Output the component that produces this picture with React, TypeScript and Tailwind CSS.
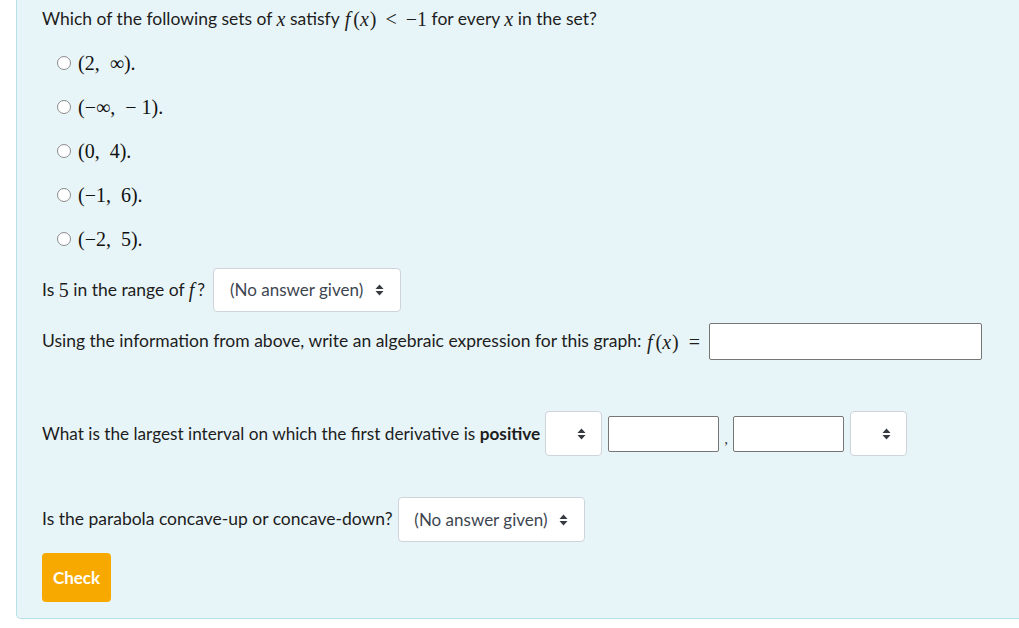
import React from 'react'

const sans = { fontFamily: 'Lato, "Open Sans", sans-serif' }
const serif = 'font-["Liberation_Serif",serif]'

function Arrows() {
  return (
    <svg width="9" height="12" viewBox="0 0 9 12" className="shrink-0">
      <path d="M4.5 0.5 L8.5 5 L0.5 5 Z" fill="#343a40" />
      <path d="M4.5 11.5 L8.5 7 L0.5 7 Z" fill="#343a40" />
    </svg>
  )
}

function Select({ label, className }: { label?: string; className: string }) {
  return (
    <div
      className={`flex items-center justify-end gap-3 bg-white border border-[#ced4da] rounded-[4px] ${className}`}
    >
      {label && <span className="text-[#3d4650] text-[17px]">{label}</span>}
      <Arrows />
    </div>
  )
}

function Option({ children }: { children: React.ReactNode }) {
  return (
    <div className="h-[44px] flex items-center">
      <span className="ml-[15px] w-[14px] h-[14px] rounded-full border border-[#8a8a8a] bg-white" />
      <span className={`ml-[7px] text-[20px] text-[#111] ${serif}`}>{children}</span>
    </div>
  )
}

// f(x) typeset roughly like MathJax
function Fx() {
  return (
    <>
      <i className="pl-[1px] pr-[3px]">f</i>(<i className="pr-[1px]">x</i>)
    </>
  )
}

export default function App() {
  return (
    <div className="w-full overflow-hidden bg-white text-[#1d1d1d]" style={sans}>
      <div className="ml-[16px] -mr-[20px] bg-[#e8f5f8] border-l border-b border-[#b7e0e8] rounded-bl-[5px] pl-[25px] pt-[7px] pb-[16px] text-[17.5px]">
        <div className="h-[24px] flex items-center">
          <span>Which of the following sets of&nbsp;</span>
          <i className={`${serif} text-[20px]`}>x</i>
          <span>&nbsp;satisfy&nbsp;</span>
          <span className={`${serif} text-[20px]`}>
            <Fx />
            <span className="mx-[9px]">&lt;</span>−1
          </span>
          <span>&nbsp;for every&nbsp;</span>
          <i className={`${serif} text-[20px]`}>x</i>
          <span>&nbsp;in the set?</span>
        </div>

        <div className="mt-[10px]">
          <Option>(2, &nbsp;∞).</Option>
          <Option>(−∞, &nbsp;− 1).</Option>
          <Option>(0, &nbsp;4).</Option>
          <Option>(−1, &nbsp;6).</Option>
          <Option>(−2, &nbsp;5).</Option>
        </div>

        <div className="mt-[7px] flex items-center">
          <span>Is&nbsp;</span>
          <span className={`${serif} text-[20px]`}>5</span>
          <span>&nbsp;in the range of&nbsp;</span>
          <i className={`${serif} text-[20px] pr-[3px]`}>f</i>
          <span>?</span>
          <Select label="(No answer given)" className="ml-[8px] w-[188px] h-[44px] pr-[16px]" />
        </div>

        <div className="mt-[11px] flex items-center">
          <span>Using the information from above, write an algebraic expression for this graph:&nbsp;</span>
          <span className={`${serif} text-[20px]`}>
            <Fx />
            <span className="ml-[10px]">=</span>
          </span>
          <div className="ml-[9px] w-[273px] h-[37px] bg-white border border-[#767676] rounded-[2px]" />
        </div>

        <div className="mt-[51px] flex items-center text-[17.2px]">
          <span>What is the largest interval on which the first derivative is&nbsp;</span>
          <span className="font-bold">positive</span>
          <Select className="ml-[5px] w-[57px] h-[45px] pr-[15px]" />
          <div className="ml-[6px] w-[111px] h-[36px] bg-white border border-[#767676] rounded-[2px]" />
          <span className={`ml-[5px] mt-[12px] text-[#333] text-[15px] italic ${serif}`}>,</span>
          <div className="ml-[5px] w-[111px] h-[36px] bg-white border border-[#767676] rounded-[2px]" />
          <Select className="ml-[6px] w-[57px] h-[45px] pr-[15px]" />
        </div>

        <div className="mt-[41px] flex items-center">
          <span>Is the parabola concave-up or concave-down?</span>
          <Select label="(No answer given)" className="ml-[6px] w-[187px] h-[45px] pr-[16px]" />
        </div>

        <button className="mt-[11px] w-[69px] h-[49px] bg-[#f8a900] rounded-[4px] text-white font-bold text-[17px]">
          Check
        </button>
      </div>
    </div>
  )
}
